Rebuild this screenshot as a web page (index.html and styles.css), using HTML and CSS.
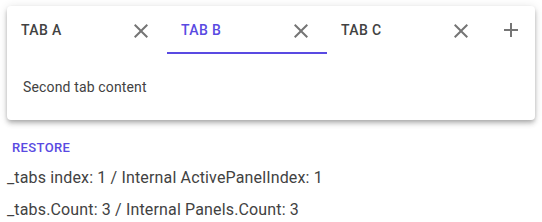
FILE: index.html
```html
<!DOCTYPE html>
<html lang="en">
<head>
    <meta charset="UTF-8">
    <meta name="viewport" content="width=device-width, initial-scale=1.0">
    <title>Dynamic Tabs</title>
    <link rel="stylesheet" href="styles.css">
</head>
<body>

    <div class="tabs-card">
        <div class="tabs-header">
            <div class="tab">
                <span class="tab-label">Tab A</span>
                <svg class="tab-close" width="24" height="24" viewBox="0 0 24 24"><path d="M19 6.41L17.59 5 12 10.59 6.41 5 5 6.41 10.59 12 5 17.59 6.41 19 12 13.41 17.59 19 19 17.59 13.41 12z"></path></svg>
            </div>
            <div class="tab active">
                <span class="tab-label">Tab B</span>
                <svg class="tab-close" width="24" height="24" viewBox="0 0 24 24"><path d="M19 6.41L17.59 5 12 10.59 6.41 5 5 6.41 10.59 12 5 17.59 6.41 19 12 13.41 17.59 19 19 17.59 13.41 12z"></path></svg>
            </div>
            <div class="tab">
                <span class="tab-label">Tab C</span>
                <svg class="tab-close" width="24" height="24" viewBox="0 0 24 24"><path d="M19 6.41L17.59 5 12 10.59 6.41 5 5 6.41 10.59 12 5 17.59 6.41 19 12 13.41 17.59 19 19 17.59 13.41 12z"></path></svg>
            </div>
            <div class="tab-add">
                <svg width="24" height="24" viewBox="0 0 24 24"><path d="M19 13h-6v6h-2v-6H5v-2h6V5h2v6h6v2z"></path></svg>
            </div>
        </div>
        <div class="tab-panel">Second tab content</div>
    </div>

    <button class="text-button">Restore</button>

    <p class="info-line">_tabs index: 1 / Internal ActivePanelIndex: 1</p>
    <p class="info-line">_tabs.Count: 3 / Internal Panels.Count: 3</p>

</body>
</html>
```

FILE: styles.css
```css
body {
    font-family: Roboto, "Liberation Sans", sans-serif;
    margin: 0;
    padding: 6px 7px 0;
    background-color: #ffffff;
    color: #424242;
}

.tabs-card {
    background-color: #ffffff;
    border-radius: 4px;
    box-shadow: 0 2px 4px -1px rgba(0, 0, 0, 0.2), 0 4px 5px 0 rgba(0, 0, 0, 0.14), 0 1px 10px 0 rgba(0, 0, 0, 0.12);
}

.tabs-header {
    display: flex;
    height: 48px;
}

.tab {
    width: 160px;
    box-sizing: border-box;
    padding: 0 14px;
    display: flex;
    align-items: center;
    justify-content: space-between;
    border-bottom: 2px solid transparent;
    font-size: 14px;
    font-weight: 500;
    letter-spacing: 0.02857em;
    text-transform: uppercase;
    color: #424242;
}

.tab.active {
    color: #594ae2;
    border-bottom-color: #594ae2;
}

.tab-label {
    padding-top: 2px;
}

.tab-close {
    fill: #757575;
    margin-top: 3px;
}

.tab-add {
    width: 48px;
    display: flex;
    align-items: center;
    justify-content: center;
    padding-bottom: 1px;
}

.tab-add svg {
    fill: #757575;
}

.tab-panel {
    padding: 23px 16px;
    font-size: 14px;
    line-height: 20px;
    letter-spacing: 0.01071em;
}

.text-button {
    display: block;
    margin: 13px 0 2px;
    padding: 4px 5px;
    border: none;
    background: none;
    font-family: inherit;
    font-size: 13px;
    font-weight: 500;
    line-height: 22.75px;
    letter-spacing: 0.02857em;
    text-transform: uppercase;
    color: #594ae2;
    cursor: pointer;
}

.info-line {
    margin: 0 0 8px;
    font-size: 16px;
    line-height: 24px;
    letter-spacing: 0.00938em;
}

.info-line:last-child {
    margin-bottom: 0;
}
```
